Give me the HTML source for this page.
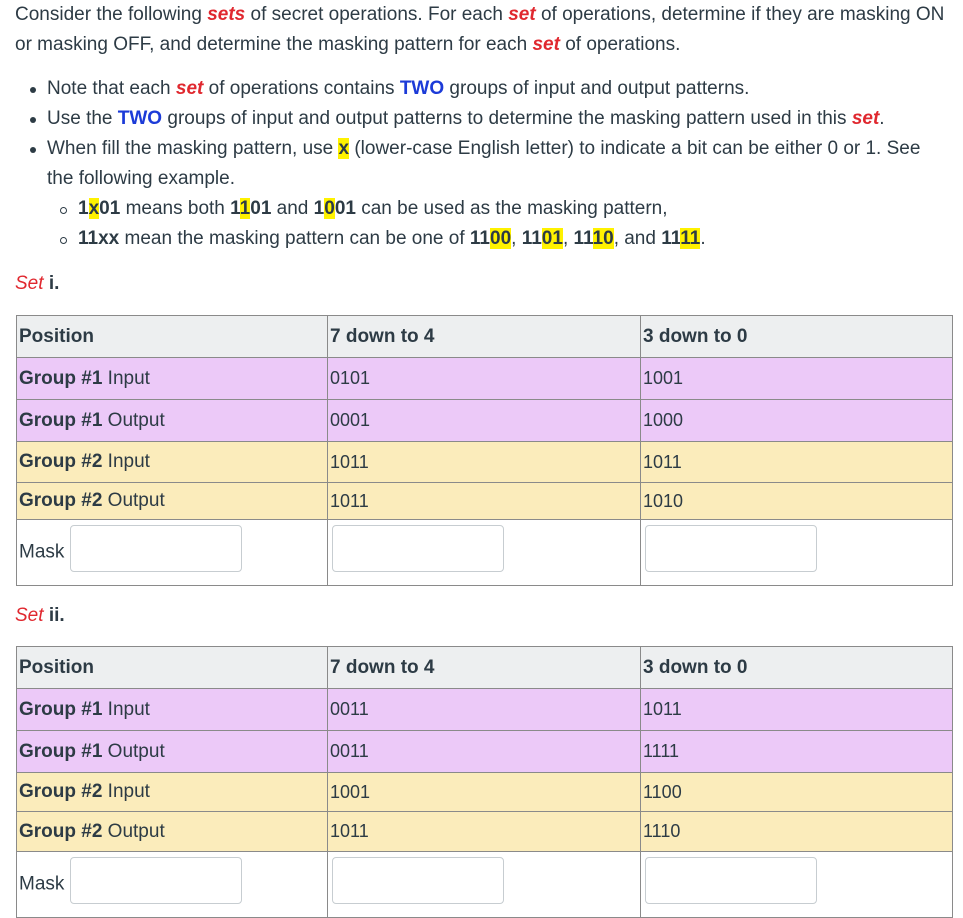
<!DOCTYPE html>
<html><head><meta charset="utf-8"><style>
body{margin:0;width:963px;height:911px;overflow:hidden;background:#fff;font-family:"Liberation Sans",sans-serif;color:#2d3b45;font-size:19px;position:relative}
.l{position:absolute;white-space:nowrap;line-height:30px}
.r{color:#e0282f;font-weight:bold;font-style:italic}
.b{color:#1c3bd8;font-weight:bold}
.y{background:#fff200}
.dot{position:absolute;width:6px;height:6px;border-radius:50%;background:#2d3b45}
.cir{position:absolute;width:5px;height:5px;border-radius:50%;border:1px solid #2d3b45}
table{position:absolute;left:16px;border-collapse:collapse;width:937px;table-layout:fixed}
td{border:1px solid #8a8a8a;padding:0 2px;font-size:19px;vertical-align:middle;box-sizing:border-box}
td.n{font-size:18px}
.h td{background:#edeff0}
.p td{background:#ecc9f8}
.yl td{background:#fbecbb}
.in{display:inline-block;width:170px;height:45px;border:1px solid #c7cdd1;border-radius:4px;vertical-align:middle;background:#fff;margin-left:2px;position:relative;top:-4px}
</style></head><body>
<div class="l" style="left:15px;top:0">Consider the following <span class="r">sets</span> of secret operations. For each <span class="r">set</span> of operations, determine if they are masking ON</div>
<div class="l" style="left:15px;top:30px">or masking OFF, and determine the masking pattern for each <span class="r">set</span> of operations.</div>
<div class="dot" style="left:30px;top:87px"></div><div class="l" style="left:47px;top:74px">Note that each <span class="r">set</span> of operations contains <span class="b">TWO</span> groups of input and output patterns.</div>
<div class="dot" style="left:30px;top:117px"></div><div class="l" style="left:47px;top:104px">Use the <span class="b">TWO</span> groups of input and output patterns to determine the masking pattern used in this <span class="r">set</span>.</div>
<div class="dot" style="left:30px;top:147px"></div><div class="l" style="left:47px;top:134px">When fill the masking pattern, use <b class="y">x</b> (lower-case English letter) to indicate a bit can be either 0 or 1. See</div>
<div class="l" style="left:47px;top:164px">the following example.</div>
<div class="cir" style="left:60px;top:207px"></div><div class="l" style="left:78px;top:194px"><b>1<span class="y">x</span>01</b> means both <b>1<span class="y">1</span>01</b> and <b>1<span class="y">0</span>01</b> can be used as the masking pattern,</div>
<div class="cir" style="left:60px;top:237px"></div><div class="l" style="left:78px;top:224px"><b>11xx</b> mean the masking pattern can be one of <b>11<span class="y">00</span></b>, <b>11<span class="y">01</span></b>, <b>11<span class="y">10</span></b>, and <b>11<span class="y">11</span></b>.</div>
<div class="l" style="left:15px;top:269px"><span class="r" style="font-weight:normal">Set</span> <b>i.</b></div>

<table style="top:315px">
<col style="width:311px"><col style="width:313px"><col>
<tr class="h" style="height:42px"><td><b>Position</b></td><td><b>7 down to 4</b></td><td><b>3 down to 0</b></td></tr>
<tr class="p" style="height:42px"><td><b>Group #1</b> Input</td><td class="n">0101</td><td class="n">1001</td></tr>
<tr class="p" style="height:42px"><td><b>Group #1</b> Output</td><td class="n">0001</td><td class="n">1000</td></tr>
<tr class="yl" style="height:41px"><td><b>Group #2</b> Input</td><td class="n">1011</td><td class="n">1011</td></tr>
<tr class="yl" style="height:37px"><td><b>Group #2</b> Output</td><td class="n">1011</td><td class="n">1010</td></tr>
<tr style="height:66px"><td>Mask<span class="in" style="margin-left:6px"></span></td><td><span class="in"></span></td><td><span class="in"></span></td></tr>
</table>

<div class="l" style="left:15px;top:601px"><span class="r" style="font-weight:normal">Set</span> <b>ii.</b></div>

<table style="top:646px">
<col style="width:311px"><col style="width:313px"><col>
<tr class="h" style="height:42px"><td><b>Position</b></td><td><b>7 down to 4</b></td><td><b>3 down to 0</b></td></tr>
<tr class="p" style="height:42px"><td><b>Group #1</b> Input</td><td class="n">0011</td><td class="n">1011</td></tr>
<tr class="p" style="height:42px"><td><b>Group #1</b> Output</td><td class="n">0011</td><td class="n">1111</td></tr>
<tr class="yl" style="height:39px"><td><b>Group #2</b> Input</td><td class="n">1001</td><td class="n">1100</td></tr>
<tr class="yl" style="height:40px"><td><b>Group #2</b> Output</td><td class="n">1011</td><td class="n">1110</td></tr>
<tr style="height:66px"><td>Mask<span class="in" style="margin-left:6px"></span></td><td><span class="in"></span></td><td><span class="in"></span></td></tr>
</table>
</body></html>
